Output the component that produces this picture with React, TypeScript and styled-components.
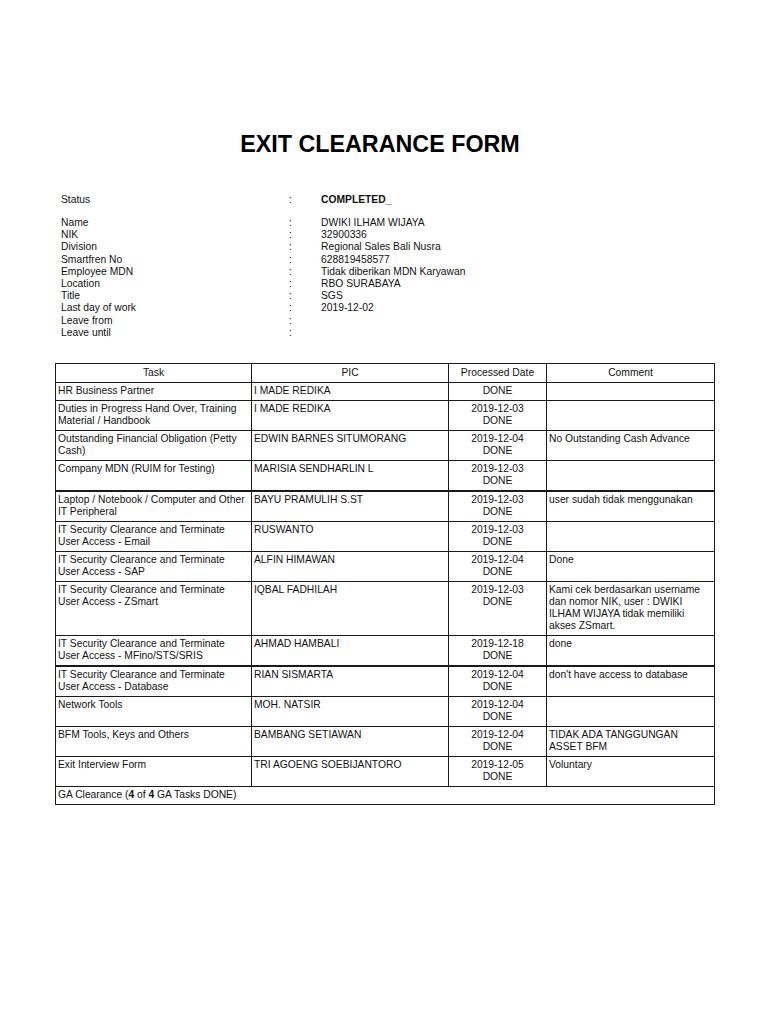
import React from "react";
import styled, { createGlobalStyle } from "styled-components";

const GlobalStyle = createGlobalStyle`
  html, body {
    margin: 0;
    padding: 0;
    background: #ffffff;
    color: #000000;
    font-family: "Liberation Sans", Arial, Helvetica, sans-serif;
  }
`;

const Page = styled.div`
  width: 768px;
  min-height: 1024px;
  box-sizing: border-box;
  padding-top: 131px;
  background: #ffffff;
`;

const Title = styled.h1`
  margin: 0;
  padding-right: 8px;
  text-align: center;
  font-size: 23.3px;
  line-height: 26px;
  font-weight: 700;
  letter-spacing: 0;
  color: #000;
`;

const InfoGrid = styled.div`
  margin-top: 37px;
  padding-left: 61px;
  display: grid;
  grid-template-columns: 228px 32px 1fr;
  font-size: 10.3px;
  line-height: 12.2px;
  color: #111;
`;

const Spacer = styled.div`
  grid-column: 1 / -1;
  height: 10.8px;
`;

const Value = styled.div<{ $bold?: boolean }>`
  font-weight: ${(p) => (p.$bold ? 700 : 400)};
  white-space: nowrap;
`;

const Table = styled.table`
  margin: 24px 0 0 55px;
  width: 659px;
  border-collapse: collapse;
  table-layout: fixed;
  font-size: 10.3px;
  line-height: 12px;
  color: #111;
`;

const Cell = styled.td<{ $center?: boolean; $thickTop?: boolean }>`
  border: 1px solid #1a1a1a;
  border-top-width: ${(p) => (p.$thickTop ? "2px" : "1px")};
  padding: 2px 2px 3px 2px;
  vertical-align: top;
  text-align: ${(p) => (p.$center ? "center" : "left")};
  font-weight: 400;
`;

const HeadCell = styled.th`
  border: 1px solid #1a1a1a;
  padding: 3px 2px 3px 2px;
  vertical-align: top;
  text-align: center;
  font-weight: 400;
`;

const info: [string, string][] = [
  ["Name", "DWIKI ILHAM WIJAYA"],
  ["NIK", "32900336"],
  ["Division", "Regional Sales Bali Nusra"],
  ["Smartfren No", "628819458577"],
  ["Employee MDN", "Tidak diberikan MDN Karyawan"],
  ["Location", "RBO SURABAYA"],
  ["Title", "SGS"],
  ["Last day of work", "2019-12-02"],
  ["Leave from", ""],
  ["Leave until", ""],
];

type Row = { task: string[]; pic: string; date?: string; comment: string[]; thick?: boolean };

const rows: Row[] = [
  { task: ["HR Business Partner"], pic: "I MADE REDIKA", comment: [] },
  { task: ["Duties in Progress Hand Over, Training", "Material / Handbook"], pic: "I MADE REDIKA", date: "2019-12-03", comment: [] },
  { task: ["Outstanding Financial Obligation (Petty", "Cash)"], pic: "EDWIN BARNES SITUMORANG", date: "2019-12-04", comment: ["No Outstanding Cash Advance"] },
  { task: ["Company MDN (RUIM for Testing)"], pic: "MARISIA SENDHARLIN L", date: "2019-12-03", comment: [] },
  { task: ["Laptop / Notebook / Computer and Other", "IT Peripheral"], pic: "BAYU PRAMULIH S.ST", date: "2019-12-03", comment: ["user sudah tidak menggunakan"], thick: true },
  { task: ["IT Security Clearance and Terminate", "User Access - Email"], pic: "RUSWANTO", date: "2019-12-03", comment: [] },
  { task: ["IT Security Clearance and Terminate", "User Access - SAP"], pic: "ALFIN HIMAWAN", date: "2019-12-04", comment: ["Done"] },
  { task: ["IT Security Clearance and Terminate", "User Access - ZSmart"], pic: "IQBAL FADHILAH", date: "2019-12-03", comment: ["Kami cek berdasarkan username", "dan nomor NIK, user : DWIKI", "ILHAM WIJAYA tidak memiliki", "akses ZSmart."] },
  { task: ["IT Security Clearance and Terminate", "User Access - MFino/STS/SRIS"], pic: "AHMAD HAMBALI", date: "2019-12-18", comment: ["done"] },
  { task: ["IT Security Clearance and Terminate", "User Access - Database"], pic: "RIAN SISMARTA", date: "2019-12-04", comment: ["don't have access to database"], thick: true },
  { task: ["Network Tools"], pic: "MOH. NATSIR", date: "2019-12-04", comment: [] },
  { task: ["BFM Tools, Keys and Others"], pic: "BAMBANG SETIAWAN", date: "2019-12-04", comment: ["TIDAK ADA TANGGUNGAN", "ASSET BFM"] },
  { task: ["Exit Interview Form"], pic: "TRI AGOENG SOEBIJANTORO", date: "2019-12-05", comment: ["Voluntary"] },
];

const Lines: React.FC<{ lines: string[] }> = ({ lines }) => (
  <>
    {lines.map((l, i) => (
      <React.Fragment key={i}>
        {i > 0 && <br />}
        {l}
      </React.Fragment>
    ))}
  </>
);

export default function App() {
  return (
    <>
      <GlobalStyle />
      <Page>
        <Title>EXIT CLEARANCE FORM</Title>
        <InfoGrid>
          <div>Status</div>
          <div>:</div>
          <Value $bold>COMPLETED_</Value>
          <Spacer />
          {info.map(([label, value]) => (
            <React.Fragment key={label}>
              <div>{label}</div>
              <div>:</div>
              <Value>{value}</Value>
            </React.Fragment>
          ))}
        </InfoGrid>
        <Table>
          <colgroup>
            <col style={{ width: 196 }} />
            <col style={{ width: 197 }} />
            <col style={{ width: 98 }} />
            <col style={{ width: 168 }} />
          </colgroup>
          <thead>
            <tr>
              <HeadCell>Task</HeadCell>
              <HeadCell>PIC</HeadCell>
              <HeadCell>Processed Date</HeadCell>
              <HeadCell>Comment</HeadCell>
            </tr>
          </thead>
          <tbody>
            {rows.map((r, i) => (
              <tr key={i}>
                <Cell $thickTop={r.thick}><Lines lines={r.task} /></Cell>
                <Cell $thickTop={r.thick}>{r.pic}</Cell>
                <Cell $thickTop={r.thick} $center>
                  {r.date ? <Lines lines={[r.date, "DONE"]} /> : "DONE"}
                </Cell>
                <Cell $thickTop={r.thick}><Lines lines={r.comment} /></Cell>
              </tr>
            ))}
            <tr>
              <Cell colSpan={4}>
                GA Clearance (<b>4</b> of <b>4</b> GA Tasks DONE)
              </Cell>
            </tr>
          </tbody>
        </Table>
      </Page>
    </>
  );
}
